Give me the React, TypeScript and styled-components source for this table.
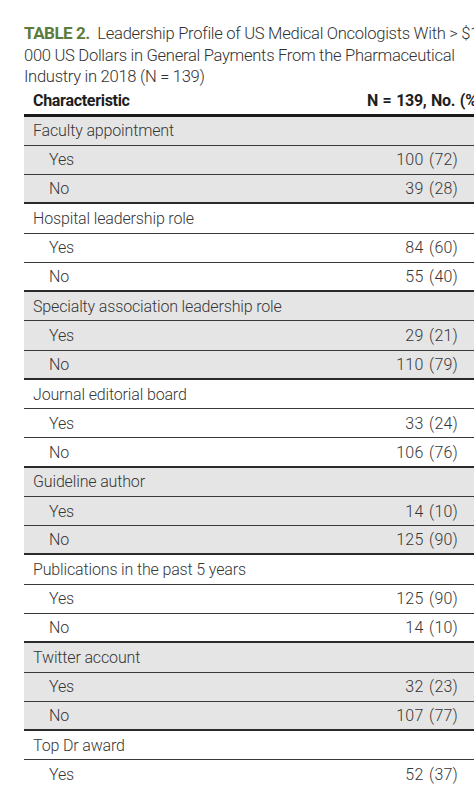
import styled, { createGlobalStyle } from 'styled-components';

type Group = { label: string; rows: [string, string][] };

const groups: Group[] = [
  { label: 'Faculty appointment', rows: [['Yes', '100 (72)'], ['No', '39 (28)']] },
  { label: 'Hospital leadership role', rows: [['Yes', '84 (60)'], ['No', '55 (40)']] },
  { label: 'Specialty association leadership role', rows: [['Yes', '29 (21)'], ['No', '110 (79)']] },
  { label: 'Journal editorial board', rows: [['Yes', '33 (24)'], ['No', '106 (76)']] },
  { label: 'Guideline author', rows: [['Yes', '14 (10)'], ['No', '125 (90)']] },
  { label: 'Publications in the past 5 years', rows: [['Yes', '125 (90)'], ['No', '14 (10)']] },
  { label: 'Twitter account', rows: [['Yes', '32 (23)'], ['No', '107 (77)']] },
  { label: 'Top Dr award', rows: [['Yes', '52 (37)'], ['No', '87 (63)']] },
];

const App = () => {
  return (
    <>
      <GlobalStyle />
      <Page>
        <Caption>
          <Line>
            <Label>TABLE 2.</Label> Leadership Profile of US Medical Oncologists With &gt; $10
          </Line>
          <Line>000 US Dollars in General Payments From the Pharmaceutical</Line>
          <Line>Industry in 2018 (N = 139)</Line>
        </Caption>
        <Table>
          <Head>
            <HeadCell>Characteristic</HeadCell>
            <HeadCell>N = 139, No. (%)</HeadCell>
          </Head>
          {groups.map((g, gi) => (
            <Section key={g.label} $shaded={gi % 2 === 0}>
              <Row>
                <Cell>{g.label}</Cell>
                <Value />
              </Row>
              {g.rows.map(([k, v], ri) => (
                <Row key={k} $last={ri === g.rows.length - 1}>
                  <Cell $indent>{k}</Cell>
                  <Value>{v}</Value>
                </Row>
              ))}
            </Section>
          ))}
        </Table>
      </Page>
    </>
  );
};

export default App;

const GlobalStyle = createGlobalStyle`
  html, body {
    margin: 0;
    padding: 0;
    background: #fff;
    overflow: hidden;
  }
`;

const Page = styled.div`
  width: 540px;
  padding: 23px 0 0 24px;
  font-family: Roboto, 'Liberation Sans', sans-serif;
  color: #363636;
`;

const Caption = styled.div`
  font-size: 16.6px;
  font-weight: 300;
  line-height: 21.5px;
  letter-spacing: -0.3px;
  color: #333;
`;

const Line = styled.div`
  white-space: nowrap;
`;

const Label = styled.span`
  font-weight: 700;
  font-size: 17px;
  color: #5b7c3c;
  letter-spacing: -0.5px;
  margin-right: 4px;
`;

const Table = styled.div`
  width: 500px;
`;

const Head = styled.div`
  display: flex;
  justify-content: space-between;
  align-items: center;
  height: 26px;
  padding: 0 0 0 9px;
  border-bottom: 3px solid #1a1a1a;
`;

const HeadCell = styled.span`
  font-size: 16px;
  font-weight: 700;
  letter-spacing: -0.3px;
  word-spacing: 1px;
  color: #1e1e1e;
  white-space: nowrap;

  &:last-child {
    margin-right: 42px;
  }
`;

const Section = styled.div<{ $shaded: boolean }>`
  background: ${(p) => (p.$shaded ? '#e5e5e5' : '#fff')};
`;

const Row = styled.div<{ $last?: boolean }>`
  box-sizing: border-box;
  display: flex;
  justify-content: space-between;
  align-items: center;
  height: 29.27px;
  padding: 0 66px 0 9px;
  border-bottom: ${(p) => (p.$last ? '2px solid #2a2a2a' : '1px solid #3a3a3a')};
`;

const Cell = styled.span<{ $indent?: boolean }>`
  font-size: 16px;
  font-weight: 300;
  letter-spacing: -0.15px;
  padding-left: ${(p) => (p.$indent ? '16px' : '0')};
  white-space: nowrap;
`;

const Value = styled.span`
  font-size: 16px;
  font-weight: 300;
  letter-spacing: 0.2px;
  word-spacing: 1.5px;
  white-space: nowrap;
`;
